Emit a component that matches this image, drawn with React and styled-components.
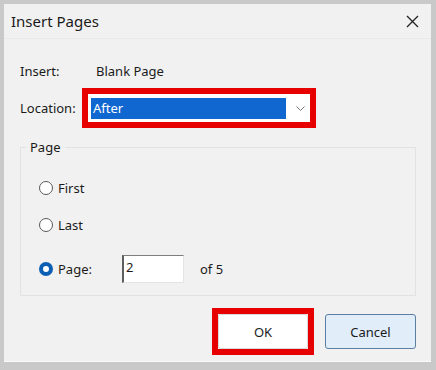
import React from 'react';
import styled, { createGlobalStyle } from 'styled-components';

const GlobalStyle = createGlobalStyle`
  html, body {
    margin: 0;
    padding: 0;
    background: #c9c9c9;
  }
  body {
    font-family: 'Noto Sans', 'Open Sans', sans-serif;
    color: #1b1b1b;
  }
`;

const Dialog = styled.div`
  margin: 4px 5px 0 4px;
  width: 427px;
  height: 358px;
  box-sizing: border-box;
  background: #f1f1f1;
  border-bottom: 1px solid #fafafa;
  display: flex;
  flex-direction: column;
`;

const TitleBar = styled.div`
  height: 34px;
  display: flex;
  align-items: center;
  justify-content: space-between;
  padding: 0 12px 0 7px;
  border-bottom: 1px solid #e9e9e9;
`;

const Title = styled.div`
  font-size: 15px;
  color: #1a1a1a;
`;

const Close = styled.svg`
  width: 13px;
  height: 13px;
`;

const Body = styled.div`
  padding: 0 15px 0 16px;
  display: flex;
  flex-direction: column;
`;

const Row = styled.div`
  display: flex;
  align-items: center;
  font-size: 13px;
  margin-top: ${(p) => p.$mt || 0}px;
  height: ${(p) => p.$h || 20}px;
`;

const Label = styled.span`
  width: ${(p) => p.$w}px;
  flex-shrink: 0;
`;

const Highlight = styled.div`
  border: 6px solid #e60000;
  display: flex;
  box-sizing: border-box;
  width: ${(p) => p.$w}px;
  height: ${(p) => p.$h}px;
`;

const Select = styled.div`
  flex: 1;
  background: #fff;
  display: flex;
  align-items: center;
  padding: 3px;
`;

const Selected = styled.div`
  width: 195px;
  height: 21px;
  background: #0f67cf;
  color: #fff;
  display: flex;
  align-items: center;
  padding-left: 2px;
  box-sizing: border-box;
`;

const Chevron = styled.svg`
  width: 9px;
  height: 5px;
  margin-left: 10px;
`;

const Group = styled.fieldset`
  margin: 10px 0 0 0;
  padding: 0 0 0 18px;
  width: 396px;
  height: 158px;
  box-sizing: border-box;
  border: 1px solid #e2e2e2;
  border-radius: 0;
  display: flex;
  flex-direction: column;
`;

const Legend = styled.legend`
  font-size: 13px;
  padding: 0 4px;
  margin-left: -13px;
  color: #1a1a1a;
`;

const Radio = styled.span`
  width: 14px;
  height: 14px;
  box-sizing: border-box;
  border-radius: 50%;
  border: ${(p) => (p.$on ? '4px solid #0d5fb3' : '1px solid #5a5a5a')};
  background: #fff;
  margin-right: 5px;
  flex-shrink: 0;
`;

const NumberInput = styled.div`
  width: 62px;
  height: 28px;
  box-sizing: border-box;
  background: #fff;
  border-left: 2px solid #5e5e5e;
  border-top: 1px solid #7d7d7d;
  border-right: 1px solid #e4e4e4;
  border-bottom: 1px solid #e4e4e4;
  font-size: 13px;
  padding: 2px 0 0 2px;
`;

const Of = styled.span`
  margin-left: 16px;
`;

const Buttons = styled.div`
  display: flex;
  justify-content: flex-end;
  align-items: center;
  margin-top: 12px;
  gap: 11px;
`;

const Button = styled.div`
  width: ${(p) => p.$w}px;
  height: 35px;
  box-sizing: border-box;
  display: flex;
  align-items: center;
  justify-content: center;
  font-size: 13px;
  border-radius: 3px;
  background: ${(p) => (p.$primary ? '#ffffff' : '#e1eefa')};
  border: 1px solid ${(p) => (p.$primary ? '#d8d8d8' : '#5a7fa3')};
`;

const App = () => {
  return (
    <>
      <GlobalStyle />
      <Dialog>
        <TitleBar>
          <Title>Insert Pages</Title>
          <Close viewBox="0 0 13 13">
            <path d="M1 1 L12 12 M12 1 L1 12" stroke="#222" strokeWidth="1.3" fill="none" />
          </Close>
        </TitleBar>
        <Body>
          <Row $mt={22}>
            <Label $w={76}>Insert:</Label>
            <span>Blank Page</span>
          </Row>
          <Row $mt={7} $h={40}>
            <Label $w={62}>Location:</Label>
            <Highlight $w={234} $h={40}>
              <Select>
                <Selected>After</Selected>
                <Chevron viewBox="0 0 9 5">
                  <path d="M0.5 0.5 L4.5 4.5 L8.5 0.5" stroke="#777" strokeWidth="1" fill="none" />
                </Chevron>
              </Select>
            </Highlight>
          </Row>
          <Group>
            <Legend>Page</Legend>
            <Row $mt={22}>
              <Radio />
              <span>First</span>
            </Row>
            <Row $mt={17}>
              <Radio />
              <span>Last</span>
            </Row>
            <Row $mt={20} $h={28}>
              <Radio $on />
              <Label $w={64}>Page:</Label>
              <NumberInput>2</NumberInput>
              <Of>of 5</Of>
            </Row>
          </Group>
          <Buttons>
            <Highlight $w={102} $h={47}>
              <Button $primary $w={90}>OK</Button>
            </Highlight>
            <Button $w={91}>Cancel</Button>
          </Buttons>
        </Body>
      </Dialog>
    </>
  );
};

export default App;
